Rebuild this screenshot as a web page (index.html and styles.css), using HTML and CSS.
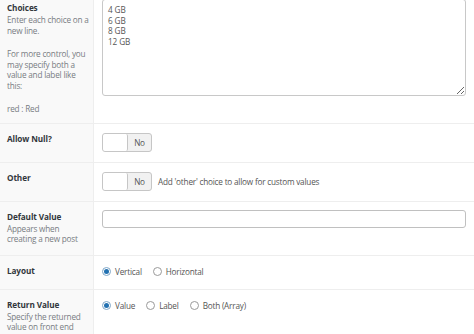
FILE: index.html
```html
<!DOCTYPE html>
<html lang="en">
<head>
    <meta charset="UTF-8">
    <meta name="viewport" content="width=device-width, initial-scale=1.0">
    <title>Field Settings</title>
    <link rel="stylesheet" href="styles.css">
</head>
<body>
    <div class="settings">
        <div class="row choices">
            <div class="label">
                <h4>Choices</h4>
                <p>Enter each choice on a new line.</p>
                <p>For more control, you may specify both a value and label like this:</p>
                <p>red : Red</p>
            </div>
            <div class="input">
                <textarea class="choices-box">4 GB
6 GB
8 GB
12 GB</textarea>
            </div>
        </div>

        <div class="row">
            <div class="label">
                <h4>Allow Null?</h4>
            </div>
            <div class="input">
                <div class="toggle-line">
                    <div class="toggle"><span class="knob"></span><span class="state">No</span></div>
                </div>
            </div>
        </div>

        <div class="row">
            <div class="label">
                <h4>Other</h4>
            </div>
            <div class="input">
                <div class="toggle-line">
                    <div class="toggle"><span class="knob"></span><span class="state">No</span></div>
                    <span class="hint">Add 'other' choice to allow for custom values</span>
                </div>
            </div>
        </div>

        <div class="row">
            <div class="label">
                <h4>Default Value</h4>
                <p>Appears when creating a new post</p>
            </div>
            <div class="input">
                <input type="text" class="text-box">
            </div>
        </div>

        <div class="row">
            <div class="label">
                <h4>Layout</h4>
            </div>
            <div class="input">
                <div class="radios">
                    <label><span class="radio checked"></span>Vertical</label>
                    <label><span class="radio"></span>Horizontal</label>
                </div>
            </div>
        </div>

        <div class="row">
            <div class="label">
                <h4>Return Value</h4>
                <p>Specify the returned value on front end</p>
            </div>
            <div class="input">
                <div class="radios">
                    <label><span class="radio checked"></span>Value</label>
                    <label><span class="radio"></span>Label</label>
                    <label><span class="radio"></span>Both (Array)</label>
                </div>
            </div>
        </div>
    </div>
</body>
</html>
```

FILE: styles.css
```css
body {
    margin: 0;
    background-color: #fff;
    font-family: "Open Sans", "Noto Sans", sans-serif;
    font-size: 8.2px;
    letter-spacing: -0.2px;
    color: #555;
}
.settings {
    margin-top: -8px;
}
.row {
    display: grid;
    grid-template-columns: 94px 1fr;
    border-top: 1px solid #eeeeee;
}
.label {
    background-color: #f9f9f9;
    border-right: 1px solid #eeeeee;
    padding: 9px 3px 10px 7px;
}
.choices .label {
    padding-bottom: 8px;
}
.label h4 {
    margin: 0 0 2px 0;
    font-size: 8.2px;
    line-height: 11px;
    font-weight: 700;
    letter-spacing: -0.1px;
    color: #32373c;
}
.label p {
    margin: 0 0 13px 0;
    line-height: 10.5px;
    color: #787c82;
}
.label p:last-child {
    margin-bottom: 0;
}
.input {
    padding: 9px 8px 10px 8px;
}
.choices-box {
    display: block;
    box-sizing: border-box;
    width: 100%;
    height: 97px;
    margin-top: -3px;
    padding: 5px 5px;
    border: 1px solid #c8c8c8;
    border-radius: 3px;
    font-family: inherit;
    font-size: 8.2px;
    letter-spacing: -0.1px;
    line-height: 10.7px;
    color: #555;
}
.toggle-line {
    display: flex;
    align-items: center;
    gap: 6px;
}
.toggle {
    display: flex;
    width: 50px;
    height: 19px;
    box-sizing: border-box;
    border: 1px solid #c6c6c6;
    border-radius: 3px;
    background-color: #f1f1f1;
    overflow: hidden;
}
.knob {
    width: 24px;
    background-color: #fff;
    border-right: 1px solid #c6c6c6;
    border-radius: 2px;
}
.state {
    flex: 1;
    display: flex;
    align-items: center;
    justify-content: center;
    color: #555;
}
.hint {
    color: #555;
}
.text-box {
    display: block;
    box-sizing: border-box;
    width: 100%;
    height: 18px;
    margin-top: -1px;
    border: 1px solid #c0c0c0;
    border-radius: 3px;
}
.radios {
    display: flex;
    gap: 11px;
    height: 14px;
    align-items: center;
}
.radios label {
    display: flex;
    align-items: center;
    gap: 4px;
    color: #555;
}
.radio {
    width: 9px;
    height: 9px;
    box-sizing: border-box;
    border: 1px solid #9a9a9a;
    border-radius: 50%;
    background-color: #fff;
    display: flex;
    align-items: center;
    justify-content: center;
}
.radio.checked {
    border-color: #7ea6c8;
}
.radio.checked::before {
    content: "";
    width: 5px;
    height: 5px;
    border-radius: 50%;
    background-color: #2271b1;
}
```
